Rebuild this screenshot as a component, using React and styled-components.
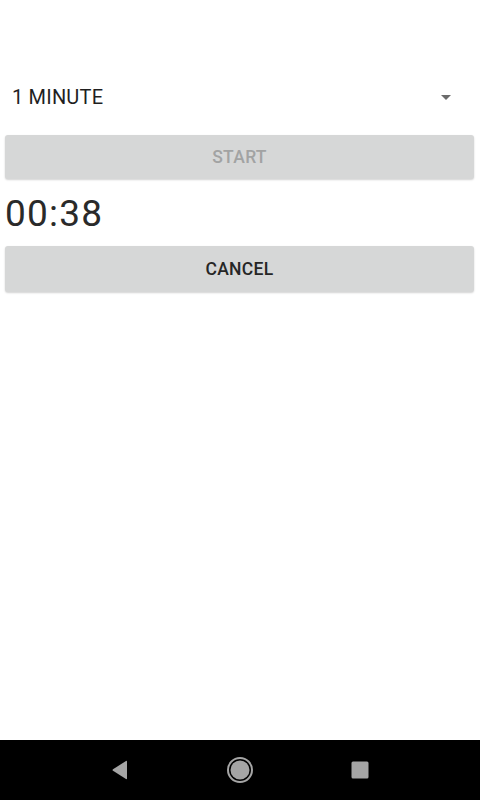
import React from "react";
import styled, { createGlobalStyle } from "styled-components";

const Global = createGlobalStyle`
  html, body { margin: 0; padding: 0; background: #ffffff; }
  body { font-family: Roboto, "Noto Sans", "Liberation Sans", sans-serif; }
  * { box-sizing: border-box; }
`;

const Screen = styled.div`
  width: 480px;
  height: 800px;
  display: flex;
  flex-direction: column;
  background: #ffffff;
`;

const Content = styled.main`
  flex: 1;
  display: flex;
  flex-direction: column;
  padding: 73px 6px 0 5px;
`;

const Spinner = styled.div`
  height: 48px;
  display: flex;
  align-items: center;
  justify-content: space-between;
  padding: 0 23px 0 7px;
`;

const SpinnerText = styled.span`
  font-size: 20px;
  line-height: 24px;
  letter-spacing: 0.2px;
  color: #1f1f1f;
`;

const Caret = styled.span`
  width: 0;
  height: 0;
  border-left: 5.5px solid transparent;
  border-right: 5.5px solid transparent;
  border-top: 5.5px solid #6b6b6b;
`;

const Button = styled.button`
  display: flex;
  align-items: center;
  justify-content: center;
  width: 100%;
  height: ${(p) => p.$h}px;
  margin-top: ${(p) => p.$mt}px;
  border: none;
  border-radius: 3px;
  background: #d6d7d7;
  box-shadow: 0 1px 2px rgba(0, 0, 0, 0.18);
  font-family: Roboto, "Noto Sans", sans-serif;
  font-weight: 500;
  font-size: 17.5px;
  letter-spacing: 0.3px;
  color: ${(p) => (p.disabled ? "#a2a3a3" : "#262626")};
  padding: 0;
`;

const Timer = styled.div`
  margin-top: 14px;
  font-size: 37px;
  line-height: 42px;
  letter-spacing: 1.2px;
  color: #2a2a2a;
`;

const NavBar = styled.nav`
  height: 60px;
  background: #000000;
  display: flex;
  justify-content: center;
  align-items: center;
`;

const NavSlot = styled.div`
  width: 120px;
  display: flex;
  justify-content: center;
  align-items: center;
`;

export default function App() {
  return (
    <Screen>
      <Global />
      <Content>
        <Spinner>
          <SpinnerText>1 MINUTE</SpinnerText>
          <Caret />
        </Spinner>
        <Button $h={44} $mt={14} disabled>
          START
        </Button>
        <Timer>00:38</Timer>
        <Button $h={46} $mt={11}>
          CANCEL
        </Button>
      </Content>
      <NavBar>
        <NavSlot>
          <svg width="18" height="20" viewBox="0 0 18 20">
            <path
              d="M16 1.5 L16 18.5 Q16 19.5 15 19 L2 10.8 Q1 10 2 9.2 L15 1 Q16 0.5 16 1.5 Z"
              fill="#a5a5a5"
            />
          </svg>
        </NavSlot>
        <NavSlot>
          <svg width="28" height="28" viewBox="0 0 28 28">
            <circle cx="14" cy="14" r="12" fill="none" stroke="#a5a5a5" strokeWidth="2" />
            <circle cx="14" cy="14" r="9.5" fill="#a5a5a5" />
          </svg>
        </NavSlot>
        <NavSlot>
          <svg width="18" height="18" viewBox="0 0 18 18">
            <rect x="0.5" y="0.5" width="17" height="17" rx="1.5" fill="#a5a5a5" />
          </svg>
        </NavSlot>
      </NavBar>
    </Screen>
  );
}
